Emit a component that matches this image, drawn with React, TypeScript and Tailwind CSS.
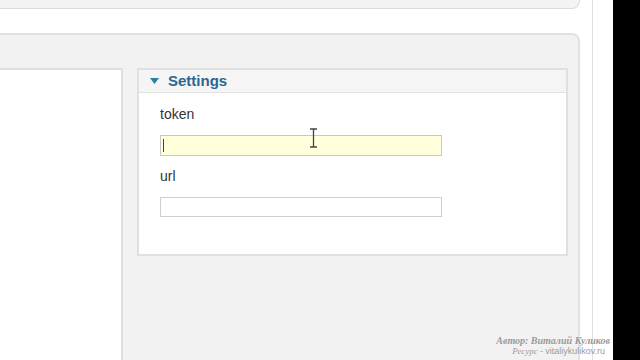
export default function App() {
  return (
    <div className="relative flex h-[360px] w-[640px] overflow-hidden bg-white font-['Liberation_Sans',Arial,sans-serif]">
      <div className="flex flex-1">
        <div className="flex w-[580px] flex-col">
          <div className="h-[9px] rounded-br-lg border-b border-r border-[#dcdcdc] bg-[#f3f3f3]" />
          <div className="h-[24px]" />
          <div className="flex flex-1 gap-[14px] rounded-tr-lg border-r-2 border-t-2 border-[#e2e2e2] bg-[#f2f2f2] pt-[33px]">
            <div className="w-[123px] border-r-2 border-t-2 border-[#dedede] bg-white" />
            <div className="flex h-[188px] w-[431px] flex-col border-2 border-[#e0e0e0] bg-white">
              <div className="flex h-[23px] items-center gap-[9px] border-b border-[#e2e2e2] bg-[#f5f5f5] pl-[11px]">
                <svg width="9" height="6" viewBox="0 0 9 6">
                  <path d="M0 0h9L4.5 6z" fill="#2e7ea3" />
                </svg>
                <span className="text-[15px] font-bold text-[#2a6791]">Settings</span>
              </div>
              <div className="flex flex-col px-[21px] pt-[11px]">
                <label className="text-[14px] text-[#333]">token</label>
                <div className="relative mt-[10px] flex h-[21px] w-[282px] items-center border border-[#c8c8c8] bg-[#ffffdc] pl-[2px]">
                  <span className="h-[13px] w-px bg-[#444]" />
                  <svg className="absolute left-[148px] top-[-8px]" width="9" height="20" viewBox="0 0 9 20">
                    <path d="M1 1h7M1 19h7M4.5 1v18" stroke="#444" strokeWidth="1.3" fill="none" />
                  </svg>
                </div>
                <label className="mt-[10px] text-[14px] text-[#333]">url</label>
                <div className="mt-[10px] h-[20px] w-[282px] border border-[#cfcfcf] bg-white" />
              </div>
            </div>
          </div>
        </div>
        <div className="w-[12px]" />
        <div className="w-px bg-[#e0e0e0]" />
      </div>
      <div className="w-[27px] bg-black" />
      <div className="absolute right-[30px] bottom-[4px] text-right leading-[10px] text-[#9a9a9a]">
        <div className="font-['Liberation_Serif',serif] text-[10px] font-bold italic">Автор: Виталий Куликов</div>
        <div className="pr-[5px] text-[9px]">
          <span className="font-['Liberation_Serif',serif] italic">Ресурс - </span>vitaliykulikov.ru
        </div>
      </div>
    </div>
  )
}
